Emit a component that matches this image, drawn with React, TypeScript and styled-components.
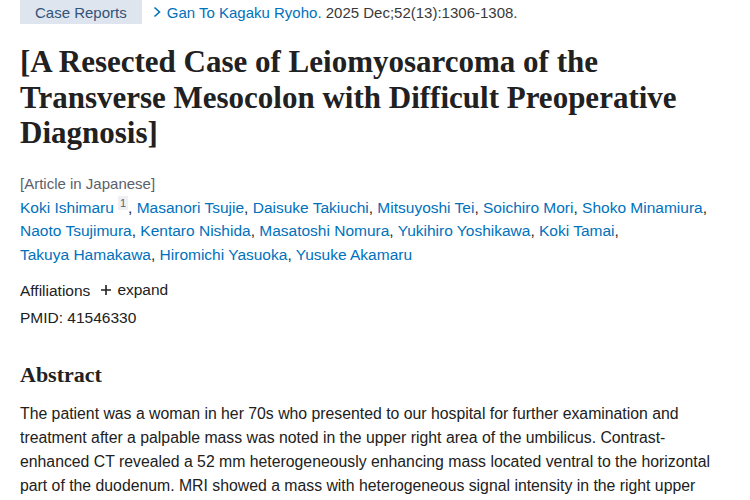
import React from "react";
import styled, { createGlobalStyle } from "styled-components";

const Global = createGlobalStyle`
  html, body { margin: 0; padding: 0; background: #ffffff; }
  body { font-family: "Liberation Sans", Arial, sans-serif; color: #212121; }
`;

const Page = styled.main`
  padding: 0 20px;
  width: 710px;
`;

const TopRow = styled.div`
  display: flex;
  align-items: center;
  gap: 10px;
  height: 24px;
  font-size: 15px;
`;

const Badge = styled.span`
  display: inline-flex;
  align-items: center;
  height: 24px;
  padding: 0 15px;
  background: #dfe5ee;
  color: #325479;
`;

const Journal = styled.span`
  display: inline-flex;
  align-items: center;
  gap: 5px;
  color: #0071bc;
`;

const Cit = styled.span`
  color: #3a3a3a;
`;

const Title = styled.h1`
  margin: 20px 0 0;
  width: 690px;
  font-family: "Liberation Serif", "Times New Roman", serif;
  font-weight: 700;
  font-size: 31px;
  line-height: 35.5px;
  color: #212121;
`;

const Lang = styled.div`
  margin-top: 23px;
  font-size: 15px;
  color: #5b616b;
  line-height: 20px;
`;

const Authors = styled.div`
  margin-top: 2px;
  font-size: 15.5px;
  line-height: 23.5px;
  color: #212121;
`;

const AuthorItem = styled.span`
  white-space: nowrap;
`;

const Author = styled.a`
  color: #0071bc;
  text-decoration: none;
`;

const Sup = styled.sup`
  display: inline-block;
  font-size: 11px;
  line-height: 14px;
  padding: 0 2px;
  margin-left: 4px;
  background: #eef0f3;
  color: #5b616b;
  vertical-align: 6px;
`;

const Meta = styled.div`
  margin-top: 10px;
  font-size: 15.5px;
  line-height: 27px;
  color: #212121;
`;

const Expand = styled.span`
  display: inline-flex;
  align-items: center;
  gap: 5px;
  margin-left: 10px;
`;

const H2 = styled.h2`
  margin: 29px 0 0;
  font-family: "Liberation Serif", "Times New Roman", serif;
  font-weight: 700;
  font-size: 22px;
  line-height: 30px;
  color: #212121;
`;

const Para = styled.p`
  margin: 12px 0 0;
  font-size: 15.8px;
  line-height: 24px;
  color: #212121;
`;

const authors = [
  "Koki Ishimaru",
  "Masanori Tsujie",
  "Daisuke Takiuchi",
  "Mitsuyoshi Tei",
  "Soichiro Mori",
  "Shoko Minamiura",
  "Naoto Tsujimura",
  "Kentaro Nishida",
  "Masatoshi Nomura",
  "Yukihiro Yoshikawa",
  "Koki Tamai",
  "Takuya Hamakawa",
  "Hiromichi Yasuoka",
  "Yusuke Akamaru",
];

export default function App() {
  return (
    <Page>
      <Global />
      <TopRow>
        <Badge>Case Reports</Badge>
        <Journal>
          <svg width="10" height="12" viewBox="0 0 10 12" fill="none">
            <path d="M2.5 1.5 L7.5 6 L2.5 10.5" stroke="#0071bc" strokeWidth="1.6" />
          </svg>
          <span>
            Gan To Kagaku Ryoho. <Cit>2025 Dec;52(13):1306-1308.</Cit>
          </span>
        </Journal>
      </TopRow>
      <Title>
        [A Resected Case of Leiomyosarcoma of the Transverse Mesocolon with Difficult Preoperative Diagnosis]
      </Title>
      <Lang>[Article in Japanese]</Lang>
      <Authors>
        {authors.map((a, i) => (
          <React.Fragment key={a}>
            <AuthorItem>
              <Author href="#">{a}</Author>
              {i === 0 && <Sup>1</Sup>}
              {i < authors.length - 1 ? "," : ""}
            </AuthorItem>
            {i < authors.length - 1 ? " " : ""}
          </React.Fragment>
        ))}
      </Authors>
      <Meta>
        <div>
          Affiliations
          <Expand>
            <svg width="12" height="12" viewBox="0 0 12 12">
              <path d="M6 1 V11 M1 6 H11" stroke="#212121" strokeWidth="1.6" />
            </svg>
            expand
          </Expand>
        </div>
        <div>PMID: 41546330</div>
      </Meta>
      <H2>Abstract</H2>
      <Para>
        The patient was a woman in her 70s who presented to our hospital for further examination and
        treatment after a palpable mass was noted in the upper right area of the umbilicus. Contrast-enhanced
        CT revealed a 52 mm heterogeneously enhancing mass located ventral to the horizontal part of the
        duodenum. MRI showed a mass with heterogeneous signal intensity in the right upper quadrant.
      </Para>
    </Page>
  );
}
